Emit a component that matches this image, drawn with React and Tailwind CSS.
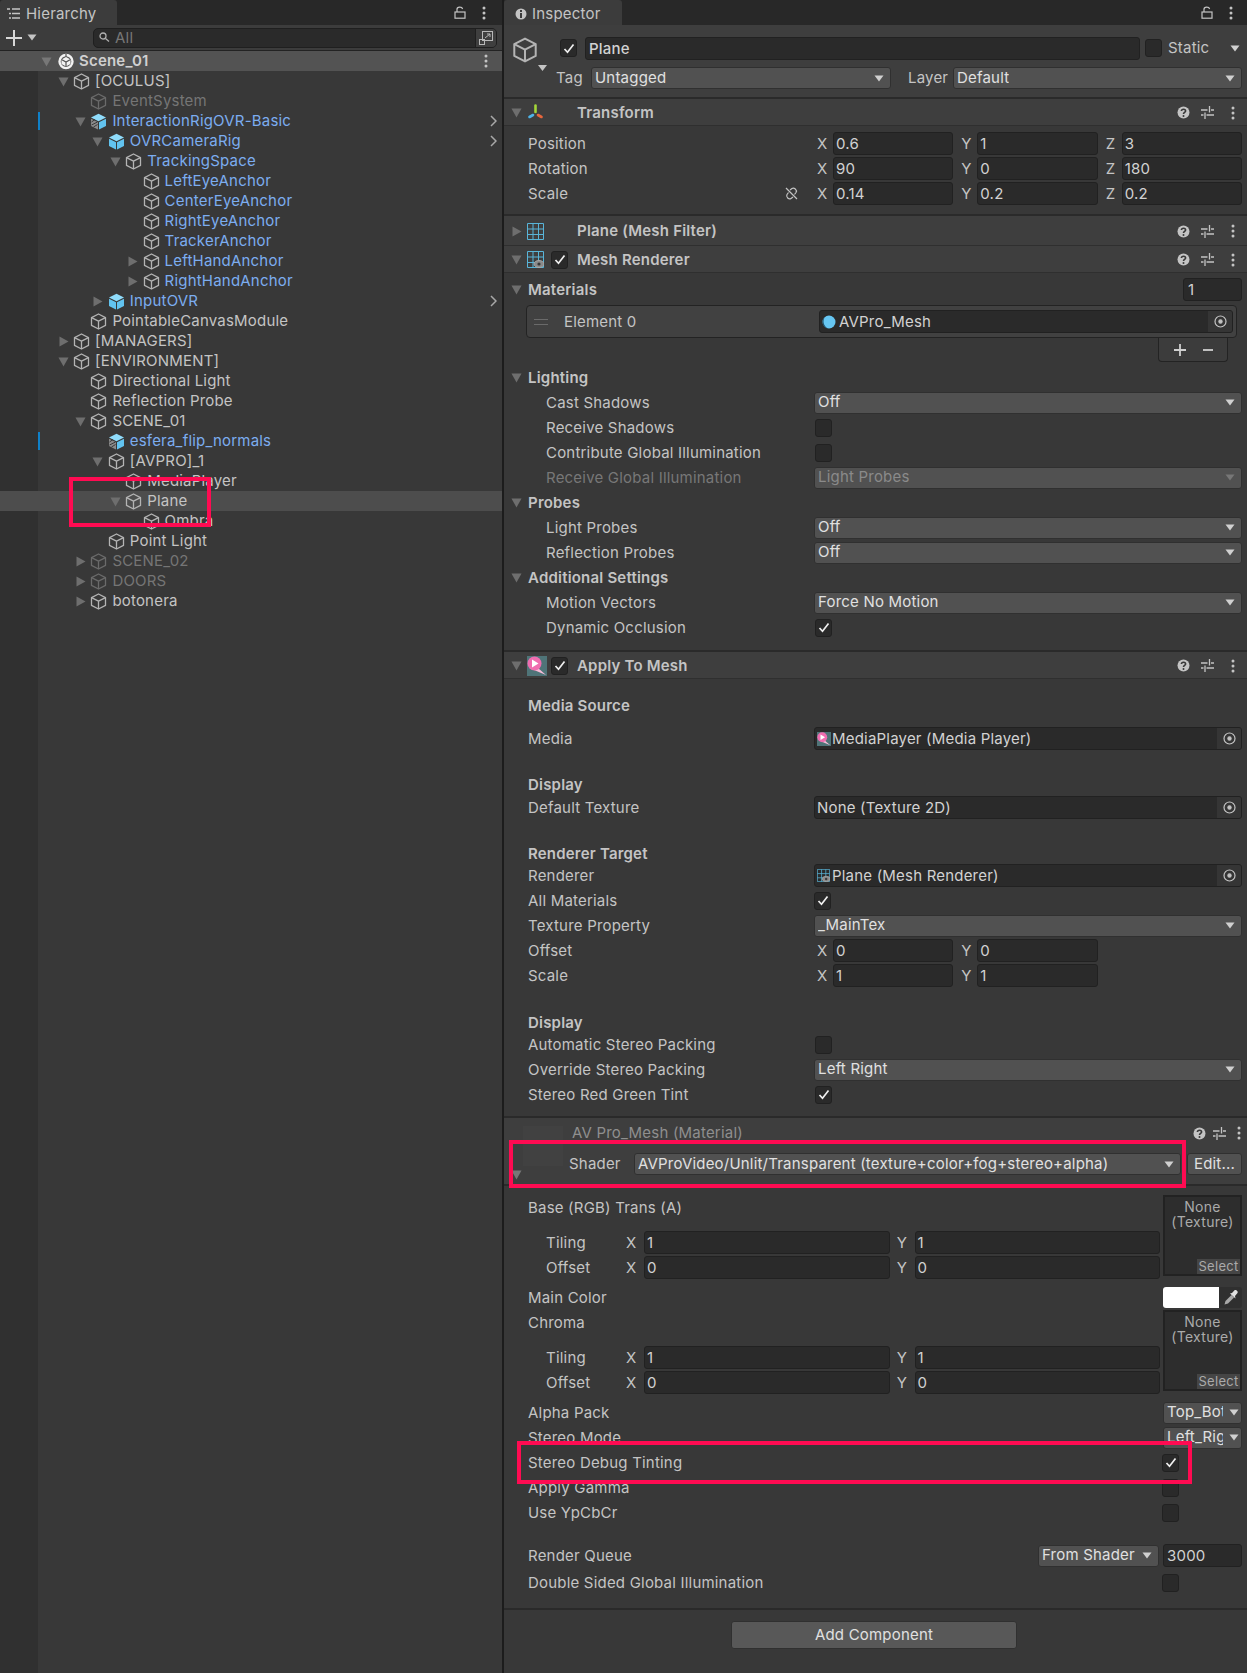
import React from "react";

const tree = [
  { d: 0, name: "[OCULUS]", arrow: "down" },
  { d: 1, name: "EventSystem", dim: true },
  { d: 1, name: "InteractionRigOVR-Basic", arrow: "down", blue: true, icon: "prefabAlt", more: true, bar: true },
  { d: 2, name: "OVRCameraRig", arrow: "down", blue: true, icon: "prefab", more: true },
  { d: 3, name: "TrackingSpace", arrow: "down", blue: true },
  { d: 4, name: "LeftEyeAnchor", blue: true },
  { d: 4, name: "CenterEyeAnchor", blue: true },
  { d: 4, name: "RightEyeAnchor", blue: true },
  { d: 4, name: "TrackerAnchor", blue: true },
  { d: 4, name: "LeftHandAnchor", arrow: "right", blue: true },
  { d: 4, name: "RightHandAnchor", arrow: "right", blue: true },
  { d: 2, name: "InputOVR", arrow: "right", blue: true, icon: "prefab", more: true },
  { d: 1, name: "PointableCanvasModule" },
  { d: 0, name: "[MANAGERS]", arrow: "right" },
  { d: 0, name: "[ENVIRONMENT]", arrow: "down" },
  { d: 1, name: "Directional Light" },
  { d: 1, name: "Reflection Probe" },
  { d: 1, name: "SCENE_01", arrow: "down" },
  { d: 2, name: "esfera_flip_normals", blue: true, icon: "prefabAlt", bar: true },
  { d: 2, name: "[AVPRO]_1", arrow: "down" },
  { d: 3, name: "MediaPlayer" },
  { d: 3, name: "Plane", arrow: "down", selected: true },
  { d: 4, name: "Ombra" },
  { d: 2, name: "Point Light" },
  { d: 1, name: "SCENE_02", arrow: "right", dim: true },
  { d: 1, name: "DOORS", arrow: "right", dim: true },
  { d: 1, name: "botonera", arrow: "right" },
];

const Cube = ({ color = "#b4b4b4", size = 17 }) => (
  <svg width={size} height={size} viewBox="0 0 17 17" fill="none" stroke={color} strokeWidth="1.3" strokeLinejoin="round" className="shrink-0">
    <path d="M8.5 1 15.5 4.6V12.4L8.5 16 1.5 12.4V4.6Z" />
    <path d="M1.5 4.6 8.5 8.2 15.5 4.6M8.5 8.2V16" />
  </svg>
);

const PrefabCube = ({ striped, size = 17 }) => (
  <svg width={size} height={size} viewBox="0 0 17 17" className="shrink-0">
    <path d="M8.5 .8 16 4.6 8.5 8.3 1 4.6Z" fill="#8fdcfb" />
    <path d="M1 5.8 8 9.3V16.4L1 12.9Z" fill={striped ? "#8a8a8a" : "#62c3ef"} />
    <path d="M9 9.3 16 5.8V12.9L9 16.4Z" fill="#62c3ef" />
    {striped && <path d="M1.5 9 5 6.5M1.5 12 7.5 9M3.5 14 7.5 11.5" stroke="#3a3a3a" strokeWidth="1" />}
  </svg>
);

const Tri = ({ dir = "down", color = "#6e6e6e" }) => (
  <svg width="11" height="11" viewBox="0 0 11 11" className="shrink-0">
    <path d={dir === "down" ? "M.5 1.5H10.5L5.5 10.5Z" : "M1.5 .5V10.5L10.5 5.5Z"} fill={color} />
  </svg>
);

const Kebab = ({ color = "#c4c4c4" }) => (
  <svg width="4" height="14" viewBox="0 0 4 14" className="shrink-0">
    <circle cx="2" cy="2" r="1.5" fill={color} />
    <circle cx="2" cy="7" r="1.5" fill={color} />
    <circle cx="2" cy="12" r="1.5" fill={color} />
  </svg>
);

const Lock = () => (
  <svg width="12" height="13" viewBox="0 0 12 13" fill="none" stroke="#c4c4c4" strokeWidth="1.2" className="shrink-0">
    <rect x="1" y="6" width="10" height="6.2" />
    <path d="M3 6V3.2C3 .6 8 .4 8.6 3" />
  </svg>
);

const Help = () => (
  <svg width="13" height="13" viewBox="0 0 13 13" className="shrink-0">
    <circle cx="6.5" cy="6.5" r="6" fill="#c4c4c4" />
    <path d="M4.4 5C4.5 2.6 8.6 2.6 8.6 5 8.6 6.400 6.500 6.400 6.500 8" fill="none" stroke="#383838" strokeWidth="1.6" />
    <circle cx="6.5" cy="10" r="1" fill="#383838" />
  </svg>
);

const Preset = () => (
  <svg width="13" height="13" viewBox="0 0 13 13" fill="none" stroke="#c4c4c4" strokeWidth="1.3" className="shrink-0">
    <path d="M0 4H6.500M10 4H13M8.500 0V6.500M0 9H2.500M5.500 9H13M4 6.500V13" />
  </svg>
);

const Check = ({ on, dim }) => (
  <span className="w-[17px] h-[18px] shrink-0 rounded-[3px] bg-[#2a2a2a] border border-[#212121] flex items-center justify-center">
    {on && (
      <svg width="12" height="11" viewBox="0 0 12 11" fill="none" stroke={dim ? "#888" : "#f0f0f0"} strokeWidth="1.7">
        <path d="M1.5 6 4.5 9.3 10.5 1.5" />
      </svg>
    )}
  </span>
);

const Field = ({ children, className = "" }) => (
  <div className={`h-[23px] min-w-0 rounded-[3px] bg-[#2a2a2a] border border-[#212121] flex items-center px-[2px] pt-[1px] text-[#d2d2d2] whitespace-nowrap overflow-hidden ${className}`}>
    {children}
  </div>
);

const Dropdown = ({ children, className = "", dim }) => (
  <div className={`h-[22px] min-w-0 rounded-[3px] bg-[#515151] border border-[#303030] flex items-center justify-between pl-[3px] pr-[6px] whitespace-nowrap ${dim ? "text-[#8a8a8a] bg-[#444444]" : "text-[#e0e0e0]"} ${className}`}>
    <span className="overflow-hidden -mt-[1px]">{children}</span>
    <svg width="10" height="7" viewBox="0 0 10 7" className="shrink-0 ml-[2px]">
      <path d="M.5 .5H9.5L5 6.5Z" fill={dim ? "#777" : "#d0d0d0"} />
    </svg>
  </div>
);

const ObjectField = ({ icon, children }) => (
  <div className="h-[23px] flex-1 rounded-[3px] bg-[#2a2a2a] border border-[#212121] flex items-center pl-[2px] text-[#d2d2d2] overflow-hidden">
    {icon}
    <span className="flex-1">{children}</span>
    <span className="w-[24px] h-full bg-[#353535] flex items-center justify-center">
      <svg width="13" height="13" viewBox="0 0 13 13" fill="none" stroke="#c4c4c4" strokeWidth="1.2">
        <circle cx="6.5" cy="6.5" r="5.5" />
        <circle cx="6.5" cy="6.5" r="1.6" fill="#c4c4c4" />
      </svg>
    </span>
  </div>
);

// label on the left, value column starts at x=815
const Row = ({ label, children, indent, dim, bold, className = "" }) => (
  <div className={`h-[25px] flex items-center pr-[5px] ${className}`}>
    <div className={`w-[310px] shrink-0 flex items-center ${indent ? "pl-[42px]" : "pl-[24px]"} ${dim ? "text-[#777777]" : bold ? "font-semibold" : ""}`}>{label}</div>
    <div className="flex-1 min-w-0 flex items-center">{children}</div>
  </div>
);

const Vec = ({ values }) => (
  <div className="flex-1 flex gap-[5px]">
    {["X", "Y", "Z"].map((axis, i) => (
      <div key={axis} className="flex-1 flex items-center min-w-0">
        {values[i] !== undefined && (
          <>
            <span className="w-[19px] shrink-0 pl-[3px]">{axis}</span>
            <Field className="flex-1">{values[i]}</Field>
          </>
        )}
      </div>
    ))}
  </div>
);

const Foldout = ({ label, open = true, className = "" }) => (
  <div className={`h-[25px] flex items-center pl-[7px] font-semibold ${className}`}>
    <span className="w-[17px]"><Tri dir={open ? "down" : "right"} /></span>
    {label}
  </div>
);

const GridIcon = ({ eye, size = 17 }) => (
  <svg width={size} height={size} viewBox="0 0 17 17" fill="none" stroke="#58b4d8" strokeWidth="1" className="shrink-0">
    <path d="M.5 .5H16.5V16.5H.5ZM6 .5V16.5M11.5 .5V16.5M.5 6H16.5M.5 11.5H16.5" />
    {eye && <ellipse cx="12" cy="13" rx="5" ry="3.500" fill="#8a8a8a" stroke="#a8a8a8" />}
    {eye && <circle cx="12" cy="13" r="1.600" fill="#383838" stroke="none" />}
  </svg>
);

const MediaIcon = ({ size = 20 }) => (
  <svg width={size} height={size} viewBox="0 0 20 20" className="shrink-0">
    <rect width="20" height="20" fill="#4f7478" />
    <path d="M11 12 19 19 7 14Z" fill="#f8bcd8" />
    <circle cx="7.500" cy="7.500" r="7" fill="#f06db0" />
    <path d="M5 3.500 11.500 7.500 5 11.500Z" fill="#ffffff" />
  </svg>
);

const ComponentHeader = ({ icon, check, title, open = true, className = "h-[27px]" }) => (
  <div className={`${className} shrink-0 bg-[#3e3e3e] border-b border-[#2f2f2f] flex items-center pt-[1px] pl-[7px] pr-[12px] font-semibold`}>
    <span className="w-[16px] shrink-0"><Tri dir={open ? "down" : "right"} /></span>
    <span className="w-[24px] shrink-0 flex items-center">{icon}</span>
    <span className="w-[26px] shrink-0 flex items-center">{check && <Check on />}</span>
    <span className="flex-1">{title}</span>
    <div className="flex items-center">
      <span className="mr-[11px]"><Help /></span>
      <span className="mr-[17px]"><Preset /></span>
      <Kebab />
    </div>
  </div>
);

const TextureSlot = () => (
  <div className="relative w-[79px] h-[81px] shrink-0 bg-[#2d2d2d] border-2 border-[#222222] flex flex-col items-center pt-[2px] text-[14px] leading-[15px] tracking-[0.3px] text-[#aaaaaa]">
    <span>None</span>
    <span>(Texture)</span>
    <span className="absolute right-0 bottom-0 w-[43px] h-[15px] bg-[#454545] text-center text-[13px] leading-[15px]">Select</span>
  </div>
);

const TilingRows = () => (
  <>
    {[["Tiling", "1"], ["Offset", "0"]].map(([label, v]) => (
      <div key={label} className="h-[25px] flex items-center">
        <span className="w-[83px] pl-[42px] shrink-0 mr-[40px]">{label}</span>
        <span className="w-[18px] -ml-[1px] shrink-0">X</span>
        <Field className="flex-1">{v}</Field>
        <span className="w-[25px] text-center shrink-0">Y</span>
        <Field className="flex-1">{v}</Field>
      </div>
    ))}
  </>
);

const HierarchyPanel = () => (
  <div className="relative w-[502px] shrink-0 h-full flex flex-col bg-[#383838]">
    <div className="h-[25px] shrink-0 bg-[#282828] flex items-center justify-between pr-[16px]">
      <div className="w-[117px] h-full bg-[#3c3c3c] rounded-t-[3px] flex items-center pl-[7px] pt-[2px] gap-[6px] text-[#c4c4c4]">
        <svg width="13" height="11" viewBox="0 0 13 11" stroke="#c4c4c4" strokeWidth="1.3" fill="none">
          <path d="M0 1H3M5 1H13M2 5.5H4M5 5.5H13M2 10H4M5 10H13" />
        </svg>
        Hierarchy
      </div>
      <div className="flex items-center gap-[16px]">
        <Lock />
        <Kebab />
      </div>
    </div>
    <div className="h-[26px] shrink-0 bg-[#3c3c3c] border-b border-[#232323] flex items-center pl-[6px] pr-[5px]">
      <svg width="16" height="16" viewBox="0 0 16 16" stroke="#d8d8d8" strokeWidth="2" className="shrink-0">
        <path d="M8 0V16M0 8H16" />
      </svg>
      <svg width="10" height="7" viewBox="0 0 10 7" className="ml-[5px] shrink-0">
        <path d="M.5 .5H9.5L5 6.5Z" fill="#c4c4c4" />
      </svg>
      <div className="ml-[56px] flex-1 h-[20px] rounded-[5px] bg-[#2a2a2a] border border-[#1f1f1f] flex items-center pl-[5px] text-[#777777] overflow-hidden">
        <svg width="12" height="11" viewBox="0 0 12 11" fill="none" stroke="#b0b0b0" strokeWidth="1.3" className="shrink-0">
          <circle cx="4" cy="4" r="3" />
          <path d="M6.5 6.5 10 9.5" />
        </svg>
        <span className="ml-[4px] flex-1">All</span>
        <span className="w-[21px] h-full bg-[#3f3f3f] border-l border-[#1f1f1f] flex items-center justify-center">
          <svg width="14" height="14" viewBox="0 0 14 14" fill="none" stroke="#b8b8b8" strokeWidth="1">
            <rect x="3.5" y=".5" width="10" height="9" />
            <rect x=".5" y="8.5" width="5" height="5" />
            <path d="M6 7 11 3M8 3H11V6" />
          </svg>
        </span>
      </div>
    </div>
    <div className="h-[20px] shrink-0 bg-[#535353] flex items-center pl-[41px] pr-[14px] font-semibold text-[#d0d0d0]">
      <Tri color="#777777" />
      <svg width="16" height="17" viewBox="0 0 16 17" className="ml-[6px] mr-[5px] shrink-0" fill="none">
        <circle cx="8" cy="8.500" r="6.500" stroke="#f2f2f2" strokeWidth="2.400" />
        <path d="M8 4 12.500 6.500V11L8 13.500 3.500 11V6.500Z" fill="#f2f2f2" />
        <path d="M3.500 6.500 8 9 12.500 6.500M8 9V14M8 1V4" stroke="#535353" strokeWidth="1.200" />
      </svg>
      <span className="flex-1">Scene_01</span>
      <Kebab />
    </div>
    <div className="flex-1 relative flex flex-col">
      <div className="absolute left-0 top-0 bottom-0 w-[38px] bg-[#303030]" />
      {tree.map((n) => (
        <div
          key={n.name}
          className={`relative h-[20px] shrink-0 flex items-center ${n.selected ? "bg-[#4d4d4d]" : ""}`}
          style={{ paddingLeft: 54 + n.d * 17.4 }}
        >
          {n.bar && <span className="absolute left-[38px] top-[1px] bottom-[1px] w-[2px] bg-[#0f80c8]" />}
          <span className="w-[18px] shrink-0 flex justify-center">
            {n.arrow && <Tri dir={n.arrow} color="#6e6e6e" />}
          </span>
          <span className="w-[23px] shrink-0 pl-[1px] flex items-center">
            {n.icon === "prefab" ? <PrefabCube /> : n.icon === "prefabAlt" ? <PrefabCube striped /> : <Cube color={n.dim ? "#6a6a6a" : "#b4b4b4"} />}
          </span>
          <span className={`${n.blue ? "text-[#7cadf0]" : n.dim ? "text-[#757575]" : "text-[#c4c4c4]"}`}>{n.name}</span>
          {n.more && (
            <svg width="7" height="12" viewBox="0 0 7 12" fill="none" stroke="#a8a8a8" strokeWidth="1.5" className="absolute left-[490px]">
              <path d="M1 1 6 6 1 11" />
            </svg>
          )}
        </div>
      ))}
    </div>
    {/* annotation */}
    <div className="absolute left-[69px] top-[477px] w-[142px] h-[50px] border-4 border-[#ff0b52]" />
  </div>
);

const InspectorPanel = () => (
  <div className="relative flex-1 min-w-0 h-full flex flex-col bg-[#383838] border-l-2 border-[#1c1c1c]">
    <div className="h-[25px] shrink-0 bg-[#282828] flex items-center justify-between pr-[14px]">
      <div className="w-[118px] h-full bg-[#3c3c3c] rounded-t-[3px] flex items-center pl-[11px] pt-[2px] gap-[5px]">
        <svg width="12" height="12" viewBox="0 0 12 12">
          <circle cx="6" cy="6" r="5.500" fill="#c4c4c4" />
          <rect x="5" y="5" width="2" height="5" fill="#3c3c3c" />
          <rect x="5" y="2" width="2" height="2" fill="#3c3c3c" />
        </svg>
        Inspector
      </div>
      <div className="flex items-center gap-[16px]">
        <Lock />
        <Kebab />
      </div>
    </div>

    {/* object header */}
    <div className="h-[74px] shrink-0 bg-[#3e3e3e] border-b-2 border-[#2a2a2a] flex pl-[8px] pr-[5px] pt-[11px]">
      <div className="relative w-[48px] shrink-0 pt-[1px]">
        <Cube size={26} color="#b4b4b4" />
        <svg width="9" height="6" viewBox="0 0 9 6" className="absolute left-[26px] top-[29px]">
          <path d="M0 0H9L4.500 6Z" fill="#c4c4c4" />
        </svg>
      </div>
      <div className="flex-1 min-w-0 flex flex-col">
        <div className="flex items-center h-[24px]">
          <Check on />
          <Field className="flex-1 ml-[8px] mr-[5px] pl-[3px] font-medium">Plane</Field>
          <Check />
          <span className="ml-[6px] w-[62px]">Static</span>
          <svg width="10" height="7" viewBox="0 0 10 7" className="mr-[2px]">
            <path d="M.5 .5H9.500L5 6.500Z" fill="#d0d0d0" />
          </svg>
        </div>
        <div className="flex items-center h-[24px] mt-[6px]">
          <span className="w-[35px] shrink-0 -ml-[4px]">Tag</span>
          <Dropdown className="w-[300px] shrink-0">Untagged</Dropdown>
          <span className="ml-[17px] w-[45px] shrink-0">Layer</span>
          <Dropdown className="flex-1">Default</Dropdown>
        </div>
      </div>
    </div>

    <ComponentHeader title="Transform" icon={
      <svg width="17" height="17" viewBox="0 0 17 17" strokeWidth="2.600" fill="none" strokeLinecap="round">
        <path d="M8.500 1.500V8" stroke="#a4d639" />
        <path d="M11 11 14.500 13" stroke="#e8663c" />
        <path d="M6 11 2.500 13" stroke="#4eb4e8" />
      </svg>
    } />
    <div className="h-[90px] shrink-0 pt-[5px] border-b-2 border-[#2a2a2a]">
      <Row label="Position"><Vec values={["0.6", "1", "3"]} /></Row>
      <Row label="Rotation"><Vec values={["90", "0", "180"]} /></Row>
      <Row label={
        <div className="w-full flex items-center justify-between pr-[15px]">
          Scale
          <svg width="15" height="15" viewBox="0 0 15 15" fill="none" stroke="#c4c4c4" strokeWidth="1.200">
            <path d="M6 4 8 2.500C10 1 13.500 4 12 6.500L10.500 8.500M9 11 7 12.500C5 14 1.500 11 3 8.500L4.500 6.500M2 2 13 13" />
          </svg>
        </div>
      }><Vec values={["0.14", "0.2", "0.2"]} /></Row>
    </div>
    <ComponentHeader className="h-[30px]" title="Plane (Mesh Filter)" icon={<GridIcon />} open={false} />
    <ComponentHeader title="Mesh Renderer" icon={<GridIcon eye />} check />

    <div className="flex items-center justify-between pr-[5px] h-[27px] mt-[3px] font-semibold">
      <Foldout label="Materials" />
      <Field className="w-[59px] font-normal pl-[4px]">1</Field>
    </div>
    <div className="mt-[2px] ml-[22px] mr-[10px] h-[33px] shrink-0 rounded-[4px] bg-[#414141] border border-[#232323] flex items-center pr-[3px]">
      <svg width="14" height="6" viewBox="0 0 14 6" stroke="#6a6a6a" className="ml-[7px] shrink-0"><path d="M0 .5H14M0 5.500H14" /></svg>
      <span className="ml-[16px] w-[255px] shrink-0">Element 0</span>
      <ObjectField icon={
        <svg width="14" height="14" viewBox="0 0 14 14" className="mr-[3px] shrink-0">
          <circle cx="7" cy="7" r="6.500" fill="#66c6f2" />
          <path d="M3 2C.5 5 1 11 6 13.500 2 13 .5 9.500 .5 7 .5 5 1.500 3 3 2Z" fill="#1f4f68" />
        </svg>
      }>AVPro_Mesh</ObjectField>
    </div>
    <div className="ml-[654px] w-[70px] h-[24px] shrink-0 border border-t-0 border-[#232323] rounded-b-[4px] bg-[#3c3c3c] flex items-center justify-center gap-[15px]">
      <svg width="14" height="14" viewBox="0 0 14 14" stroke="#d0d0d0" strokeWidth="1.800"><path d="M7 1V13M1 7H13" /></svg>
      <svg width="12" height="14" viewBox="0 0 12 14" stroke="#d0d0d0" strokeWidth="1.800"><path d="M1 7H11" /></svg>
    </div>

    <Foldout label="Lighting" className="mt-[3px]" />
    <Row label="Cast Shadows" indent><Dropdown className="flex-1">Off</Dropdown></Row>
    <Row label="Receive Shadows" indent><span className="ml-[1px]"><Check /></span></Row>
    <Row label="Contribute Global Illumination" indent><span className="ml-[1px]"><Check /></span></Row>
    <Row label="Receive Global Illumination" indent dim><Dropdown className="flex-1" dim>Light Probes</Dropdown></Row>
    <Foldout label="Probes" />
    <Row label="Light Probes" indent><Dropdown className="flex-1">Off</Dropdown></Row>
    <Row label="Reflection Probes" indent><Dropdown className="flex-1">Off</Dropdown></Row>
    <Foldout label="Additional Settings" />
    <Row label="Motion Vectors" indent><Dropdown className="flex-1">Force No Motion</Dropdown></Row>
    <Row label="Dynamic Occlusion" indent><span className="ml-[1px]"><Check on /></span></Row>
    <div className="h-[12px] shrink-0 border-b-2 border-[#2a2a2a]" />

    <ComponentHeader title="Apply To Mesh" icon={<MediaIcon />} check />
    <div className="h-[14px] shrink-0" />
    <Row label="Media Source" bold />
    <div className="h-[8px] shrink-0" />
    <Row label="Media">
      <ObjectField icon={<span className="mr-[1px]"><MediaIcon size={14} /></span>}>MediaPlayer (Media Player)</ObjectField>
    </Row>
    <div className="h-[21px] shrink-0" />
    <Row label="Display" bold />
    <Row label="Default Texture" className="-mt-[2px]"><ObjectField>None (Texture 2D)</ObjectField></Row>
    <div className="h-[21px] shrink-0" />
    <Row label="Renderer Target" bold />
    <Row label="Renderer" className="-mt-[3px]">
      <ObjectField icon={<span className="mr-[2px]"><GridIcon eye size={13} /></span>}>Plane (Mesh Renderer)</ObjectField>
    </Row>
    <Row label="All Materials"><Check on /></Row>
    <Row label="Texture Property"><Dropdown className="flex-1">_MainTex</Dropdown></Row>
    <Row label="Offset"><Vec values={["0", "0"]} /></Row>
    <Row label="Scale"><Vec values={["1", "1"]} /></Row>
    <div className="h-[22px] shrink-0" />
    <Row label="Display" bold />
    <Row label="Automatic Stereo Packing" className="-mt-[3px]"><span className="ml-[1px]"><Check /></span></Row>
    <Row label="Override Stereo Packing"><Dropdown className="flex-1">Left Right</Dropdown></Row>
    <Row label="Stereo Red Green Tint"><span className="ml-[1px]"><Check on /></span></Row>
    <div className="h-[9px] shrink-0" />

    {/* material */}
    <div className="relative h-[70px] shrink-0 bg-[#3e3e3e] border-y-2 border-[#2a2a2a]">
      <span className="absolute left-[19px] top-[8px] w-[40px] h-[40px] bg-[#414141]" />
      <div className="relative h-[30px] flex items-center pl-[68px] pr-[6px]">
        <span className="flex-1 text-[#8f8f8f]">AV Pro_Mesh (Material)</span>
        <div className="flex items-center">
          <span className="mr-[7px]"><Help /></span>
          <span className="mr-[11px]"><Preset /></span>
          <Kebab />
        </div>
      </div>
      <div className="relative flex items-center h-[22px] mt-[5px] pl-[65px] pr-[5px]">
        <span className="w-[65px] shrink-0">Shader</span>
        <Dropdown className="flex-1">AVProVideo/Unlit/Transparent (texture+color+fog+stereo+alpha)</Dropdown>
        <span className="ml-[6px] w-[55px] h-[22px] rounded-[3px] bg-[#515151] border border-[#303030] text-[#e0e0e0] text-center leading-[19px]">Edit...</span>
      </div>
      <span className="absolute left-[7px] top-[51px]"><Tri color="#777777" /></span>
    </div>

    <div className="flex h-[99px] shrink-0 pt-[9px] pr-[5px]">
      <div className="flex-1 min-w-0 flex flex-col">
        <div className="h-[25px] flex items-center pl-[24px]">Base (RGB) Trans (A)</div>
        <div className="h-[10px] shrink-0" />
        <TilingRows />
      </div>
      <div className="ml-[3px]"><TextureSlot /></div>
    </div>
    <div className="h-[25px] shrink-0 flex items-center justify-between pl-[24px] pr-[5px]">
      Main Color
      <div className="w-[79px] h-[21px] flex items-center rounded-[3px] bg-[#2f2f2f] overflow-hidden">
        <span className="w-[56px] h-full bg-white" />
        <svg width="16" height="17" viewBox="0 0 16 17" className="ml-[4px]">
          <path d="M1.500 15.500 2.500 12 8.500 6 11 8.500 5 14.500Z" fill="#a8a8a8" />
          <path d="M7 4.500 9 4 11.500 1.200C13 0 15.500 2.500 14.500 4L12 7 12.500 9.500Z" fill="#e0e0e0" />
        </svg>
      </div>
    </div>
    <div className="flex h-[90px] shrink-0 pr-[5px]">
      <div className="flex-1 min-w-0 flex flex-col">
        <div className="h-[25px] flex items-center pl-[24px]">Chroma</div>
        <div className="h-[10px] shrink-0" />
        <TilingRows />
      </div>
      <div className="ml-[3px]"><TextureSlot /></div>
    </div>
    <div className="h-[25px] shrink-0 flex items-center justify-between pl-[24px] pr-[5px]">
      Alpha Pack
      <Dropdown className="w-[79px] !pr-[2px]"><span className="block w-[56px] overflow-hidden">Top_Bottom</span></Dropdown>
    </div>
    <div className="h-[25px] shrink-0 flex items-center justify-between pl-[24px] pr-[5px]">
      Stereo Mode
      <Dropdown className="w-[79px] !pr-[2px]"><span className="block w-[56px] overflow-hidden">Left_Right</span></Dropdown>
    </div>
    {["Stereo Debug Tinting", "Apply Gamma", "Use YpCbCr"].map((label, i) => (
      <div key={label} className="h-[25px] shrink-0 flex items-center justify-between pl-[24px] pr-[68px]">
        {label}
        <Check on={i === 0} />
      </div>
    ))}
    <div className="h-[18px] shrink-0" />
    <div className="h-[25px] shrink-0 flex items-center pl-[24px] pr-[5px]">
      <span className="flex-1">Render Queue</span>
      <Dropdown className="w-[121px]">From Shader</Dropdown>
      <Field className="ml-[4px] w-[79px] pl-[3px]">3000</Field>
    </div>
    <div className="h-[27px] mt-[1px] shrink-0 flex items-center justify-between pl-[24px] pr-[68px]">
      Double Sided Global Illumination
      <Check />
    </div>
    <div className="h-[14px] shrink-0 border-b-2 border-[#2a2a2a]" />
    <div className="flex justify-center pt-[11px] pr-[3px]">
      <div className="w-[286px] h-[28px] rounded-[3px] bg-[#585858] border border-[#303030] text-[#e0e0e0] text-center leading-[26px]">Add Component</div>
    </div>

    {/* annotations */}
    <div className="absolute left-[5px] top-[1140px] w-[677px] h-[48px] border-4 border-[#ff0b52]" />
    <div className="absolute left-[13px] top-[1441px] w-[675px] h-[43px] border-4 border-[#ff0b52]" />
  </div>
);

export default function App() {
  return (
    <div className="w-[1247px] h-[1673px] overflow-hidden flex bg-[#282828] text-[15px] leading-[20px] tracking-[0.2px] text-[#c4c4c4] font-['Inter',sans-serif]">
      <HierarchyPanel />
      <InspectorPanel />
    </div>
  );
}
